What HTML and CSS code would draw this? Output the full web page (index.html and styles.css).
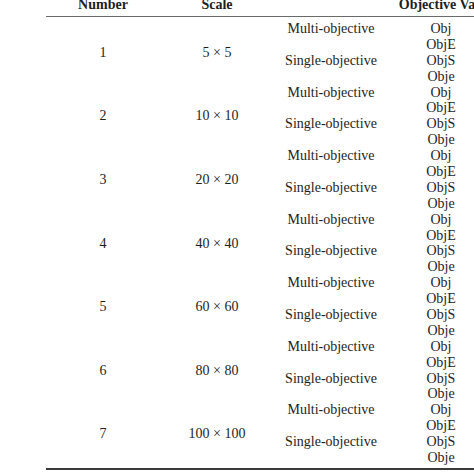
FILE: index.html
```html
<!DOCTYPE html>
<html>
<head>
<meta charset="utf-8">
<link rel="stylesheet" href="styles.css">
</head>
<body>
<table class="results">
  <colgroup>
    <col class="c-num"><col class="c-scale"><col class="c-method"><col class="c-val">
  </colgroup>
  <thead>
    <tr><th>Number</th><th>Scale</th><th></th><th class="h-val">Objective Value</th></tr>
  </thead>
  <tbody>
    <tr class="gap-top"><td colspan="4"></td></tr>
    <tr><td rowspan="4">1</td><td rowspan="4">5 × 5</td><td>Multi-objective</td><td>Obj</td></tr>
    <tr><td rowspan="3">Single-objective</td><td>ObjE</td></tr>
    <tr><td>ObjS</td></tr>
    <tr><td>Obje</td></tr>
    <tr><td rowspan="4">2</td><td rowspan="4">10 × 10</td><td>Multi-objective</td><td>Obj</td></tr>
    <tr><td rowspan="3">Single-objective</td><td>ObjE</td></tr>
    <tr><td>ObjS</td></tr>
    <tr><td>Obje</td></tr>
    <tr><td rowspan="4">3</td><td rowspan="4">20 × 20</td><td>Multi-objective</td><td>Obj</td></tr>
    <tr><td rowspan="3">Single-objective</td><td>ObjE</td></tr>
    <tr><td>ObjS</td></tr>
    <tr><td>Obje</td></tr>
    <tr><td rowspan="4">4</td><td rowspan="4">40 × 40</td><td>Multi-objective</td><td>Obj</td></tr>
    <tr><td rowspan="3">Single-objective</td><td>ObjE</td></tr>
    <tr><td>ObjS</td></tr>
    <tr><td>Obje</td></tr>
    <tr><td rowspan="4">5</td><td rowspan="4">60 × 60</td><td>Multi-objective</td><td>Obj</td></tr>
    <tr><td rowspan="3">Single-objective</td><td>ObjE</td></tr>
    <tr><td>ObjS</td></tr>
    <tr><td>Obje</td></tr>
    <tr><td rowspan="4">6</td><td rowspan="4">80 × 80</td><td>Multi-objective</td><td>Obj</td></tr>
    <tr><td rowspan="3">Single-objective</td><td>ObjE</td></tr>
    <tr><td>ObjS</td></tr>
    <tr><td>Obje</td></tr>
    <tr><td rowspan="4">7</td><td rowspan="4">100 × 100</td><td>Multi-objective</td><td>Obj</td></tr>
    <tr><td rowspan="3">Single-objective</td><td>ObjE</td></tr>
    <tr><td>ObjS</td></tr>
    <tr><td>Obje</td></tr>
    <tr class="gap-bottom"><td colspan="4"></td></tr>
  </tbody>
</table>
</body>
</html>
```
FILE: styles.css
```css
html, body {
  margin: 0;
  padding: 0;
  background: #fff;
  overflow: hidden;
  width: 474px;
  height: 474px;
}
.results {
  margin-left: 46px;
  border-collapse: collapse;
  table-layout: fixed;
  width: 448px;
  font-family: "Liberation Serif", "Times New Roman", serif;
  font-size: 14px;
  color: #1e1e1e;
  border-bottom: 2px solid #3a3a3a;
}
.c-num, .c-scale, .c-method { width: 114px; }
.c-val { width: 106px; }
.results th {
  font-weight: bold;
  line-height: 10px;
  height: 10px;
  padding: 0 0 6px 0;
  text-align: center;
  border-bottom: 1px solid #6a6a6a;
  white-space: nowrap;
}
.results th.h-val { padding-left: 10px; }
.results td {
  padding: 0;
  height: 15.89px;
  line-height: 15.89px;
  text-align: center;
  vertical-align: middle;
  white-space: nowrap;
}
.results .gap-top td { height: 4px; line-height: 4px; }
.results .gap-bottom td { height: 2px; line-height: 2px; }
```
